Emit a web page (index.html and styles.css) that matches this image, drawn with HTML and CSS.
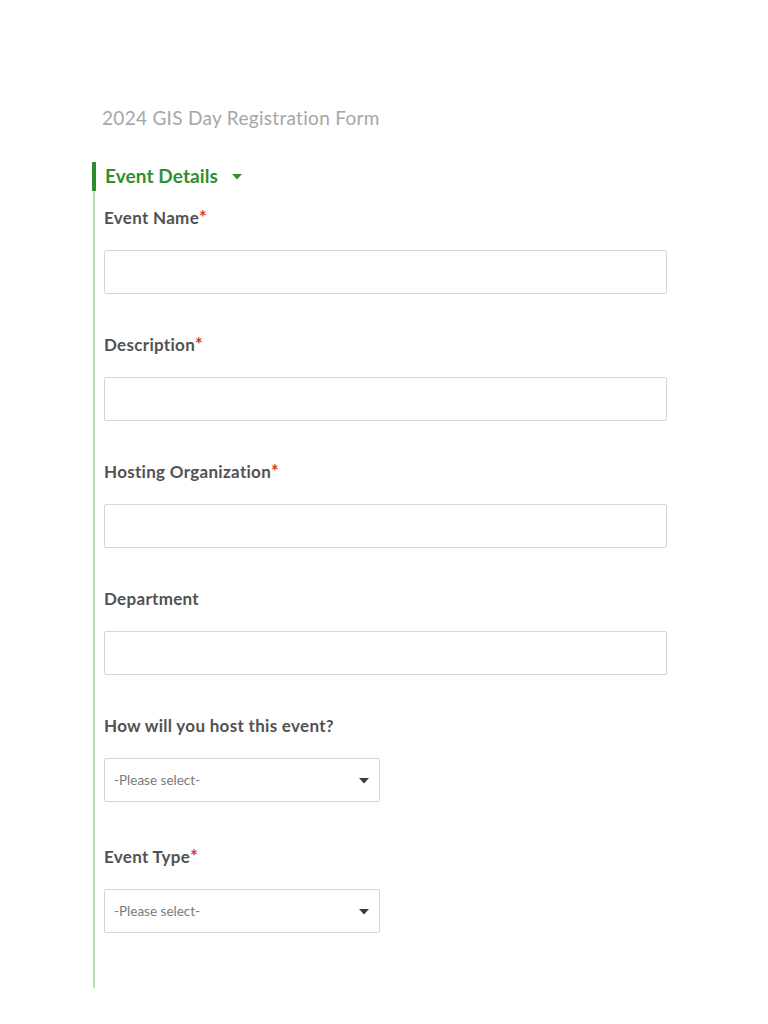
FILE: index.html
```html
<!doctype html>
<html lang="en">
<head>
    <meta charset="UTF-8">
    <meta name="viewport" content="width=device-width, initial-scale=1.0">
    <title>2024 GIS Day Registration Form</title>
    <link rel="stylesheet" href="styles.css">
</head>
<body>
<div class="form">
    <h1 class="form_title">2024 GIS Day Registration Form</h1>

    <div class="group">
        <div class="group_header">
            <span>Event Details</span>
            <svg class="caret" width="10" height="6" viewBox="0 0 10 6"><path d="M0 0h10L5 5.5z"/></svg>
        </div>

        <div class="field">
            <label class="field_label">Event Name<span class="req">*</span></label>
            <div class="input"></div>
        </div>

        <div class="field">
            <label class="field_label">Description<span class="req">*</span></label>
            <div class="input"></div>
        </div>

        <div class="field">
            <label class="field_label">Hosting Organization<span class="req">*</span></label>
            <div class="input"></div>
        </div>

        <div class="field">
            <label class="field_label">Department</label>
            <div class="input"></div>
        </div>

        <div class="field field-select">
            <label class="field_label">How will you host this event?</label>
            <div class="select">
                <span>-Please select-</span>
                <svg width="10" height="6" viewBox="0 0 10 6"><path d="M0 0h10L5 5.5z"/></svg>
            </div>
        </div>

        <div class="field field-select">
            <label class="field_label">Event Type<span class="req">*</span></label>
            <div class="select">
                <span>-Please select-</span>
                <svg width="10" height="6" viewBox="0 0 10 6"><path d="M0 0h10L5 5.5z"/></svg>
            </div>
        </div>
    </div>
</div>
</body>
</html>
```

FILE: styles.css
```css
body {
    margin: 0;
    padding: 0;
    background: #fff;
    font-family: Lato, "Noto Sans", sans-serif;
}

.form {
    padding: 106px 0 0 93px;
}

.form_title {
    margin: 0 0 32px 9px;
    font-size: 19px;
    line-height: 24px;
    font-weight: 400;
    letter-spacing: 0.3px;
    color: #a6a6a6;
}

.group {
    border-left: 2px solid #b9ddb3;
    padding: 0 0 55px 9px;
    width: 600px;
}

.group_header {
    display: flex;
    align-items: center;
    gap: 14px;
    height: 29px;
    margin-left: -12px;
    padding-left: 9px;
    border-left: 4px solid #2e8a2e;
    font-size: 19px;
    line-height: 24px;
    font-weight: 700;
    letter-spacing: 0.1px;
    color: #2f8f2c;
    margin-bottom: 15px;
}

.group_header span {
    margin-top: -2px;
}

.caret {
    fill: #2f8f2c;
    margin-top: 1px;
}

.field {
    margin-bottom: 39px;
}

.field:last-child {
    margin-bottom: 0;
}

.field-select {
    margin-bottom: 43px;
}

.field_label {
    display: block;
    height: 24px;
    margin-bottom: 20px;
    font-size: 17px;
    line-height: 24px;
    font-weight: 700;
    letter-spacing: 0.3px;
    color: #525252;
}

.req {
    color: #d33a2a;
    font-size: 18px;
    line-height: 0;
}

.input {
    width: 561px;
    height: 42px;
    border: 1px solid #d6d6d6;
    border-radius: 2px;
}

.select {
    display: flex;
    align-items: center;
    justify-content: space-between;
    width: 255px;
    height: 42px;
    padding: 0 10px 0 9px;
    border: 1px solid #d6d6d6;
    border-radius: 2px;
    font-size: 13.5px;
    color: #7a7a7a;
}

.select svg {
    fill: #3c3c3c;
    margin-top: 2px;
}
```
